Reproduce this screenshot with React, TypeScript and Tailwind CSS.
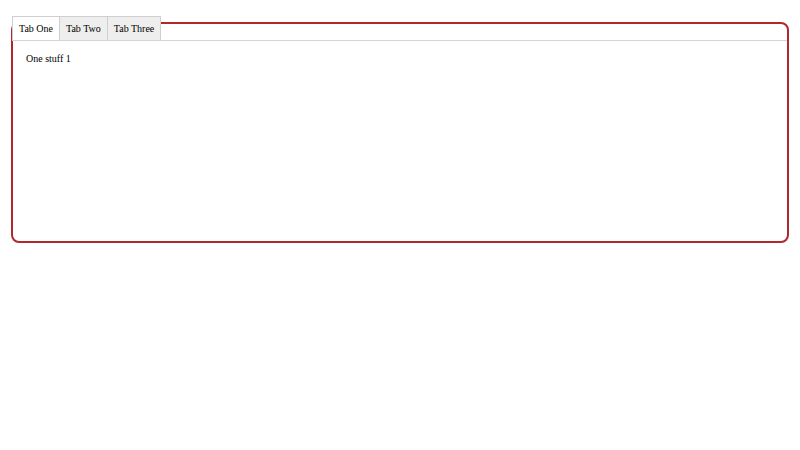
import { useState } from "react";

const tabs = [
  { label: "Tab One", body: "One stuff 1" },
  { label: "Tab Two", body: "Two stuff 2" },
  { label: "Tab Three", body: "Three stuff 3" },
];

export default function App() {
  const [active, setActive] = useState(0);

  return (
    <div className="w-[800px] h-[450px] bg-white pt-[22px] px-[11px] text-[10px] text-black" style={{ fontFamily: '"Liberation Serif", serif' }}>
      {/* Red rounded frame */}
      <div className="h-[221px] rounded-[8px] border-2 border-[#b0282c] flex flex-col">
        {/* Tab strip */}
        <div className="relative z-10 -mt-[8px] -ml-px flex border-b border-[#d4d4d4]">
          {tabs.map((t, i) => (
            <button
              key={t.label}
              onClick={() => setActive(i)}
              className={
                i === active
                  ? "h-[24px] px-[6px] border border-b-0 border-[#cfcfcf] bg-white leading-none"
                  : "h-[24px] px-[6px] border border-b-0 border-l-0 border-[#cfcfcf] bg-[#eeeeee] leading-none"
              }
            >
              {t.label}
            </button>
          ))}
        </div>

        {/* Panel */}
        <div className="px-[13px] pt-[10px]">{tabs[active].body}</div>
      </div>
    </div>
  );
}
